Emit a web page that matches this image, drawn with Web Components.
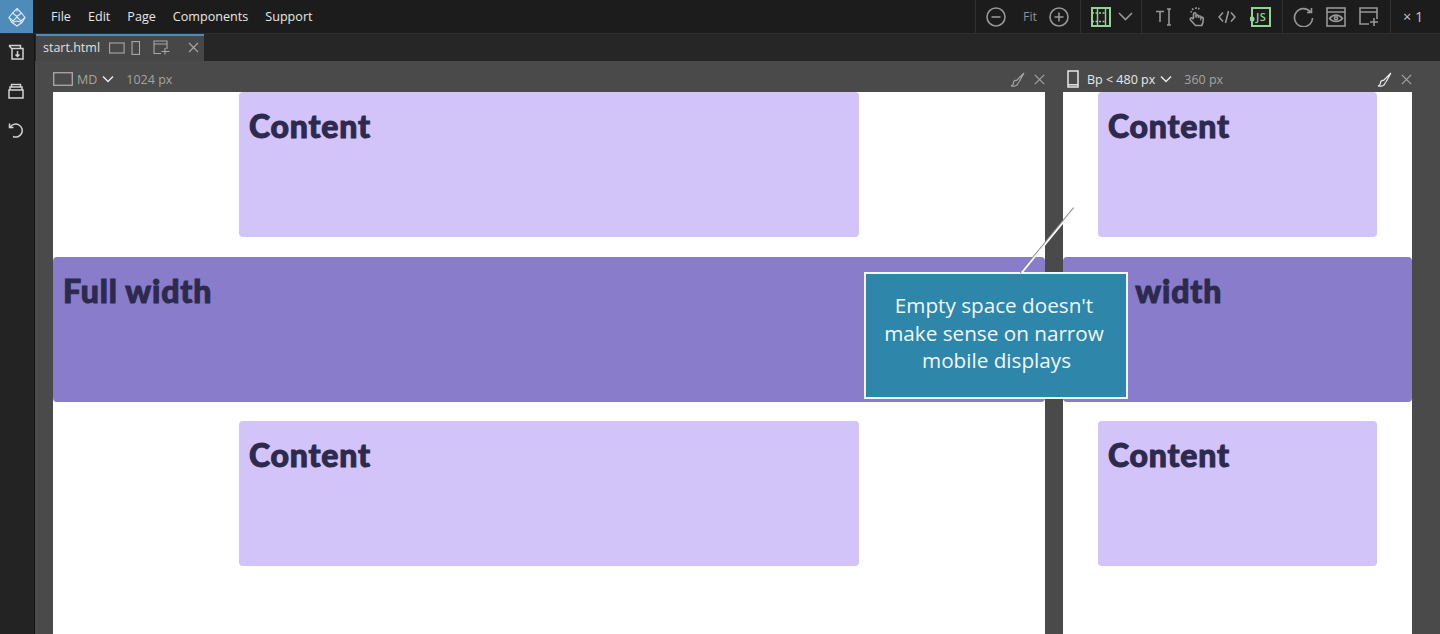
<!DOCTYPE html>
<html>
<head>
<meta charset="utf-8">
<title>start.html</title>
<style>
    html, body { margin: 0; height: 100%; overflow: hidden; background: #4a4a4a; }
    body { font-family: "Open Sans", "Liberation Sans", sans-serif; }
    app-shell { height: 634px; }
</style>
</head>
<body>

<app-shell>
    <menu-bar slot="menu"></menu-bar>
    <side-rail slot="rail"></side-rail>
    <tab-strip slot="tabs"></tab-strip>
    <view-panel slot="left" kind="md">
        <demo-box kind="content">Content</demo-box>
        <demo-box kind="full">Full width</demo-box>
        <demo-box kind="content">Content</demo-box>
    </view-panel>
    <view-panel slot="right" kind="bp">
        <demo-box kind="content" narrow>Content</demo-box>
        <demo-box kind="full">Full width</demo-box>
        <demo-box kind="content" narrow>Content</demo-box>
    </view-panel>
    <call-out slot="over">Empty space doesn't<br>make sense on narrow<br><span style="padding-left:5px">mobile displays</span></call-out>
</app-shell>

<script>
const GREY = '#979797';
const GREEN = '#92d498';

class AppShell extends HTMLElement {
    constructor() {
        super();
        this.attachShadow({ mode: 'open' });
        this.shadowRoot.innerHTML = `
            <style>
                :host {
                    display: grid;
                    position: relative;
                    overflow: hidden;
                    grid-template-columns: 35px 1fr;
                    grid-template-rows: 34px 27px 1fr;
                    grid-template-areas: "menu menu" "rail tabs" "rail work";
                }
                .menu { grid-area: menu; }
                .rail { grid-area: rail; }
                .tabs { grid-area: tabs; }
                .work {
                    grid-area: work;
                    display: flex;
                    gap: 18px;
                    padding-left: 18px;
                    background: #4a4a4a;
                    min-height: 0;
                }
                .left { display: flex; width: 992px; }
                .right { display: flex; width: 349px; }
            </style>
            <div class="menu"><slot name="menu"></slot></div>
            <div class="rail"><slot name="rail"></slot></div>
            <div class="tabs"><slot name="tabs"></slot></div>
            <div class="work">
                <div class="left"><slot name="left"></slot></div>
                <div class="right"><slot name="right"></slot></div>
            </div>
            <slot name="over"></slot>
        `;
    }
}

class MenuBar extends HTMLElement {
    constructor() {
        super();
        this.attachShadow({ mode: 'open' });
        this.shadowRoot.innerHTML = `
            <style>
                :host {
                    display: flex;
                    height: 34px;
                    box-sizing: border-box;
                    background: #1c1c1c;
                    border-bottom: 1px solid #2e2e2e;
                    color: #e6e6e6;
                    font-size: 12.600px;
                    font-weight: 500;
                }
                .logo {
                    width: 33px;
                    height: 33px;
                    background: #4f8bb8;
                    display: flex;
                    align-items: center;
                    justify-content: center;
                }
                nav { display: flex; align-items: center; gap: 17px; padding-left: 18px; flex: 1; }
                .tools { display: flex; }
                .group {
                    display: flex;
                    align-items: center;
                    height: 33px;
                    box-sizing: border-box;
                    border-left: 1px solid #303030;
                    position: relative;
                }
                svg { display: block; fill: none; stroke: ${GREY}; stroke-width: 1.600; flex: none; }
                .green { stroke: ${GREEN}; }
                .fit { color: #8f8f8f; font-weight: 400; font-size: 12.500px; }
                .zoom { color: #c4c4c4; font-size: 14.500px; font-weight: 500; }
                .js {
                    position: absolute;
                    left: 114px;
                    top: 9px;
                    color: ${GREEN};
                    font-size: 11px;
                    line-height: 15px;
                    font-weight: 600;
                    letter-spacing: .5px;
                }
            </style>
            <div class="logo">
                <svg width="20" height="20" viewBox="0 0 20 20" style="stroke:#dfeaf2;stroke-width:1.100">
                    <path d="M10 1.500L14.500 6l3.500 4.500-3 5-5 3.500-5-3.500-3-5L5.500 6z"/>
                    <path d="M5.500 6L10 9.500 14.500 6M2 10.500l4 3.500 4-4 4 4 4-3.500M5 15.500L10 14l5 1.500M10 1.500v3"/>
                </svg>
            </div>
            <nav><span>File</span><span>Edit</span><span>Page</span><span>Components</span><span>Support</span></nav>
            <div class="tools">
                <div class="group" style="width:105px">
                    <svg style="margin-left:10px" width="20" height="20" viewBox="0 0 20 20"><circle cx="10" cy="10" r="9"/><path d="M5.500 10h9"/></svg>
                    <span class="fit" style="margin-left:17px">Fit</span>
                    <svg style="margin-left:12px" width="20" height="20" viewBox="0 0 20 20"><circle cx="10" cy="10" r="9"/><path d="M5.500 10h9M10 5.500v9"/></svg>
                </div>
                <div class="group" style="width:61px">
                    <svg style="margin-left:10px" width="20" height="20" viewBox="0 0 20 20" class="green"><rect x="1" y="1" width="18" height="18" stroke-width="2"/><path d="M6.500 1v18M14.500 1v18" stroke-width="1.400"/><path d="M1 6h13.500M1 14.500h13.500" stroke-width="1.400" stroke-dasharray="2 1.500"/></svg>
                    <svg style="margin-left:7px" width="15" height="9" viewBox="0 0 15 9"><path d="M1 1l6.500 6.500L14 1"/></svg>
                </div>
                <div class="group" style="width:141px">
                    <svg style="margin-left:13px" width="18" height="18" viewBox="0 0 18 18"><path d="M1 3.500h8M5 3.500V14M12 1h4M14 1v16M12 17h4"/></svg>
                    <svg style="margin-left:15px" width="18" height="20" viewBox="0 0 18 20"><path d="M5.500 11.500V7a1.200 1.200 0 0 1 2.500 0v3.500l.3-1.500a1.100 1.100 0 0 1 2.200.3v1.700l.3-1a1.100 1.100 0 0 1 2.200.3v1l.3-.5a1.100 1.100 0 0 1 2 .6c0 2.500-.3 5-1.500 7.100H7.500L2.500 13c-1-1.500 1-2.800 2-1.800l1 1"/><path d="M3 5.500a5.500 5.500 0 0 1 9-3M4 2.500L5 1.500M8 1h1" stroke-dasharray="1.500 1.500"/></svg>
                    <svg style="margin-left:12px" width="18" height="14" viewBox="0 0 18 14"><path d="M5 2.500L1 7l4 4.500M13 2.500L17 7l-4 4.500M10.500 1L7.500 13"/></svg>
                    <svg style="margin-left:14px" width="21" height="20" viewBox="0 0 21 20" class="green"><rect x="2" y="1" width="18" height="18" stroke-width="2"/><circle cx="2" cy="12" r="1.800" fill="${GREEN}"/></svg>
                    <span class="js">JS</span>
                </div>
                <div class="group" style="width:108px">
                    <svg style="margin-left:10px" width="21" height="20" viewBox="0 0 21 20"><path d="M17.500 5A9 9 0 1 0 19.500 11M18.500 1v4.500H14"/></svg>
                    <svg style="margin-left:12px" width="20" height="20" viewBox="0 0 20 20"><rect x="1" y="1" width="18" height="18"/><path d="M1 5h18M3.500 11.500c3.500-4.500 9.500-4.500 13 0c-3.500 4-9.500 4-13 0z"/><circle cx="10" cy="11.300" r="1.600"/></svg>
                    <svg style="margin-left:13px" width="20" height="20" viewBox="0 0 20 20"><path d="M10 17H1V1h17v11M1 5h17M15 11v8M11 15h8"/></svg>
                </div>
                <div class="group zoom" style="width:50px;padding-left:12px">× 1</div>
            </div>
        `;
    }
}

class SideRail extends HTMLElement {
    constructor() {
        super();
        this.attachShadow({ mode: 'open' });
        this.shadowRoot.innerHTML = `
            <style>
                :host {
                    display: flex;
                    flex-direction: column;
                    align-items: center;
                    gap: 23px;
                    height: 600px;
                    box-sizing: border-box;
                    padding: 10px 2px 0 0;
                    background: #232323;
                    border-right: 1px solid #151515;
                }
                svg { display: block; fill: none; stroke: #d2d2d2; stroke-width: 1.500; }
            </style>
            <svg width="16" height="16" viewBox="0 0 16 16"><path d="M1 1.500h11.500v3M1 1.500l2.500 3H15V15H4V5M9.500 7v5.500M7.500 10.500l2 2 2-2"/></svg>
            <svg width="16" height="16" viewBox="0 0 16 16"><path d="M3.500 4V1.500h9V4M2 7V4h12v3M1 7h14v8H1z"/></svg>
            <svg width="16" height="16" viewBox="0 0 16 16"><path d="M1.500 1.500v4h4M2 5.500A6.500 6.500 0 1 1 5 14.500"/></svg>
        `;
    }
}

class TabStrip extends HTMLElement {
    constructor() {
        super();
        this.attachShadow({ mode: 'open' });
        this.shadowRoot.innerHTML = `
            <style>
                :host { display: flex; height: 27px; background: #262626; }
                .tab {
                    width: 168px;
                    margin-left: 1px;
                    box-sizing: border-box;
                    background: #474747;
                    border-top: 2px solid #4f8bb8;
                    display: flex;
                    align-items: center;
                    padding: 0 0 2px 7px;
                    color: #e0e0e0;
                    font-size: 12.500px;
                }
                svg { display: block; fill: none; stroke: #a8a8a8; stroke-width: 1.100; flex: none; }
            </style>
            <div class="tab">
                <span>start.html</span>
                <svg style="margin-left:9px" width="16" height="12" viewBox="0 0 16 12"><rect x=".6" y="1" width="14.500" height="10"/></svg>
                <svg style="margin-left:6px" width="10" height="14" viewBox="0 0 10 14"><rect x="1" y=".6" width="7.500" height="12.800"/></svg>
                <svg style="margin-left:12px" width="17" height="15" viewBox="0 0 17 15"><path d="M8 13.500H1V1h13v8M1 4h13M12 8v6.500M8.500 11.500h8"/></svg>
                <svg style="margin-left:18px" width="11" height="11" viewBox="0 0 11 11"><path d="M1 1l9 9M10 1l-9 9"/></svg>
            </div>
        `;
    }
}

class ViewPanel extends HTMLElement {
    constructor() {
        super();
        this.attachShadow({ mode: 'open' });
        const md = this.getAttribute('kind') === 'md';
        const brush = `<svg class="${md ? '' : 'bright'}" width="15" height="15" viewBox="0 0 15 15"><path d="M14 1L6.500 8.500M14 1l-5 9M6.500 8.500c-2-.5-3 1-3 2.500c0 1.500-1 2.500-2.500 3c3 .5 7 0 7.500-4"/></svg>`;
        const close = `<svg width="11" height="11" viewBox="0 0 11 11"><path d="M.8.8l9.400 9.400M10.200.8L.8 10.200"/></svg>`;
        this.shadowRoot.innerHTML = `
            <style>
                :host { display: flex; flex-direction: column; width: 100%; }
                header {
                    height: 31px;
                    box-sizing: border-box;
                    padding-top: 5px;
                    flex: none;
                    display: flex;
                    align-items: center;
                    font-size: 12.500px;
                    color: #a3a3a3;
                }
                svg { display: block; fill: none; stroke: #a3a3a3; stroke-width: 1.200; flex: none; }
                svg.bright { stroke: #e8e8e8; }
                .name { color: ${md ? '#a3a3a3' : '#e8e8e8'}; }
                .end { margin-left: auto; display: flex; align-items: center; gap: 9px; }
                .page {
                    flex: 1;
                    background: #fff;
                    display: flex;
                    flex-direction: column;
                    gap: 19.400px;
                }
            </style>
            <header>
                ${md
                    ? `<svg style="margin-right:4px" width="20" height="14" viewBox="0 0 20 14"><rect x=".7" y=".7" width="18.600" height="12.600" stroke-width="1.400"/></svg>`
                    : `<svg style="margin:0 8px 0 4px;stroke:#e8e8e8" width="12" height="18" viewBox="0 0 12 18"><rect x="1" y="1" width="10" height="16" stroke-width="1.500"/><path d="M1 14.800h10" stroke-width="1.500"/></svg>`}
                <span class="name">${md ? 'MD' : 'Bp &lt; 480 px'}</span>
                <svg style="margin:0 12px 0 5px;stroke:#e8e8e8" width="12" height="8" viewBox="0 0 12 8"><path d="M1 1.500l5 5 5-5" stroke-width="1.500"/></svg>
                <span>${md ? '1024 px' : '360 px'}</span>
                <div class="end">${brush}${close}</div>
            </header>
            <div class="page"><slot></slot></div>
        `;
    }
}

class DemoBox extends HTMLElement {
    constructor() {
        super();
        this.attachShadow({ mode: 'open' });
        this.shadowRoot.innerHTML = `
            <style>
                :host {
                    display: block;
                    box-sizing: border-box;
                    height: 145.200px;
                    border-radius: 4px;
                    padding: 14px 10px 0;
                    font-family: Lato, "Open Sans", sans-serif;
                    font-weight: 900;
                    font-size: 32px;
                    line-height: 40px;
                    letter-spacing: .8px;
                    color: #2d2a4e;
                    -webkit-text-stroke: 1px #2d2a4e;
                }
                :host([kind="content"]) { background: #d2c3f8; margin-left: 186px; width: 620px; }
                :host([kind="content"][narrow]) { margin-left: 35px; width: 279px; }
                :host([kind="full"]) { background: #887ccb; width: 100%; }
            </style>
            <slot></slot>
        `;
    }
}

class CallOut extends HTMLElement {
    constructor() {
        super();
        this.attachShadow({ mode: 'open' });
        this.shadowRoot.innerHTML = `
            <style>
                :host {
                    position: absolute;
                    left: 864px;
                    top: 272px;
                    width: 264px;
                    height: 127px;
                    box-sizing: border-box;
                    display: flex;
                    align-items: center;
                    justify-content: center;
                    text-align: center;
                    background: #2e86ab;
                    border: 2px solid #f2f6f8;
                    color: #f2f7f9;
                    font-size: 20.700px;
                    line-height: 27.500px;
                }
                div { position: relative; top: -2px; left: -2px; }
                svg { position: absolute; left: 153px; top: -66px; overflow: visible; }
            </style>
            <svg width="56" height="66" viewBox="0 0 56 66">
                <path d="M1.500 65L55 0" stroke="#8a8a8a" stroke-width="2" fill="none"/>
                <path d="M2.500 65L56 0" stroke="#fafafa" stroke-width="1.800" fill="none"/>
            </svg>
            <div><slot></slot></div>
        `;
    }
}

customElements.define('app-shell', AppShell);
customElements.define('menu-bar', MenuBar);
customElements.define('side-rail', SideRail);
customElements.define('tab-strip', TabStrip);
customElements.define('view-panel', ViewPanel);
customElements.define('demo-box', DemoBox);
customElements.define('call-out', CallOut);
</script>
</body>
</html>
